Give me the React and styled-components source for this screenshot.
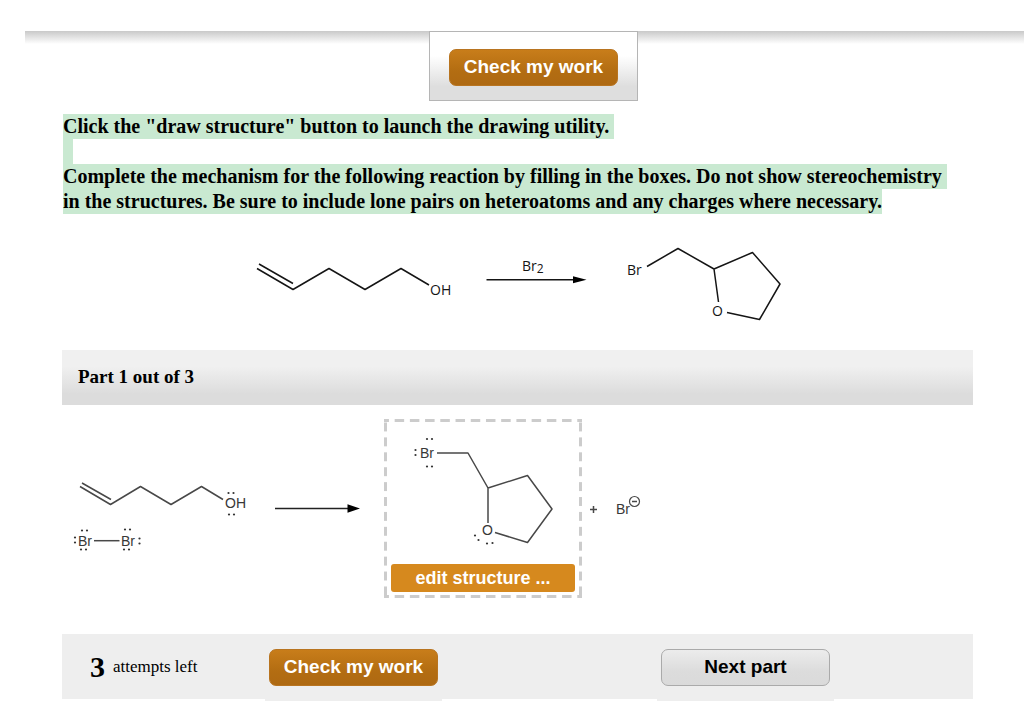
import styled, { createGlobalStyle } from "styled-components";

const GlobalStyle = createGlobalStyle`
  * {
    box-sizing: border-box;
  }

  body {
    margin: 0;
    background: #fff;
    color: #000;
    font-family: "Liberation Serif", "Times New Roman", serif;
  }
`;

const Page = styled.div`
  padding: 31px 0 22px 25px;
`;

const TopBar = styled.header`
  display: flex;
  justify-content: center;
  padding-left: 18px;
  background: linear-gradient(#c9c9c9, #fff) no-repeat top / 100% 13px;
`;

const Tab = styled.div`
  padding: 17px 19px 14px;
  height: 70px;
  border: 1px solid #b5b5b5;
  background: linear-gradient(#fff 35%, #dedede 80%);
`;

const Button = styled.button`
  display: block;
  width: 169px;
  height: 37px;
  padding: 0 0 2px;
  border: 1px solid ${({ $primary }) => ($primary ? "#b87420" : "#aaa")};
  border-radius: 7px;
  background: ${({ $primary }) =>
    $primary
      ? "linear-gradient(#c87d1a, #b36d12 60%, #ae6912)"
      : "linear-gradient(#ececec, #dcdcdc 60%, #dadada)"};
  color: ${({ $primary }) => ($primary ? "#fff" : "#000")};
  font: bold 19px "Liberation Sans", Arial, sans-serif;
`;

const Content = styled.main`
  padding: 13px 51px 0 37px;
`;

const Instructions = styled.p`
  margin: 0;
  padding: 0 12px 0 1px;
  font-size: 20px;
  font-weight: bold;
  line-height: 25px;
  white-space: break-spaces;
`;

const Highlight = styled.mark`
  padding: 1px 0 2px;
  background: #c9e9d1;
  color: #000;
`;

const Drawing = styled.svg`
  display: block;
  flex: none;
  overflow: visible;
  fill: none;
  stroke: ${({ $soft }) => ($soft ? "#484848" : "#151515")};
  stroke-width: 1.5;
  stroke-linejoin: round;

  text {
    fill: ${({ $soft }) => ($soft ? "#383838" : "#151515")};
    stroke: none;
    font-size: 14px;
    font-family: ${({ $soft }) =>
      $soft
        ? '"Liberation Sans", Arial, sans-serif'
        : '"Open Sans", "Noto Sans", sans-serif'};
  }
`;

const Reaction = styled.div`
  display: flex;
  justify-content: center;
  padding: 26px 0 26px 4px;
`;

const PartHeading = styled.h2`
  margin: 0;
  padding: 14px 16px 16px;
  background: linear-gradient(#f0f0f0 30%, #dcdcdc 80%);
  font-size: 19px;
  line-height: 25px;
`;

const Mechanism = styled.section`
  display: flex;
  align-items: flex-start;
  padding: 14px 0 36px 10px;
`;

const dash = (direction) =>
  `linear-gradient(${direction}, #ccc 30%, transparent 30% 70%, #ccc 70%)`;

/* the dashes are longer than those of a dashed border */
const AnswerBox = styled.div`
  flex: none;
  display: flex;
  flex-direction: column;
  justify-content: space-between;
  width: 198px;
  height: 179px;
  margin-left: 22px;
  padding: 16px 7px 6px;
  background:
    ${dash("90deg")} top / 15px 3px round no-repeat,
    ${dash("90deg")} bottom / 15px 3px round no-repeat,
    ${dash("180deg")} left / 3px 15px no-repeat round,
    ${dash("180deg")} right / 3px 15px no-repeat round;
`;

const EditButton = styled.button`
  height: 28px;
  padding: 0;
  border: 0;
  border-radius: 3px;
  background: #d6891e;
  color: #fff;
  font: bold 18px "Liberation Sans", Arial, sans-serif;
`;

const Footer = styled.footer`
  display: flex;
  align-items: flex-start;
  height: 65px;
  padding-left: 28px;
  background: #eee;
`;

const Attempts = styled.p`
  flex: none;
  display: flex;
  align-items: center;
  gap: 8px;
  width: 175px;
  height: 65px;
  margin: 0;
  font-size: 17px;

  strong {
    font-size: 30px;
  }
`;

const ButtonSlot = styled.div`
  flex: none;
  padding: 15px 4px;
  background: #eee;

  & + & {
    margin: 0 139px 0 auto;
  }
`;

const LonePairs = ({ dots }) =>
  dots.map(([x, y]) => (
    <circle key={`${x}-${y}`} cx={x} cy={y} r="1.1" fill="#333" stroke="none" />
  ));

const OverallReaction = () => (
  <Drawing width="540" height="84" viewBox="250 240 540 84">
    <path d="M259 264 293 283.5M257 268.5 293 289.5 329 268.5 365 289.5 401 268.5 429 285" />
    <text x="430" y="295">
      OH
    </text>
    <text x="522" y="271">
      Br
      <tspan dy="2" fontSize="12">
        2
      </tspan>
    </text>
    <path d="M486.5 279.7H575" />
    <path d="M573 276.2 586.5 279.7 573 283.2Z" fill="#000" stroke="none" />
    <text x="627" y="275">
      Br
    </text>
    <path d="M647 266.5 678 248.5 714 269 752.5 252.5 780 284 759.5 319.5 727 312.5M714 269 718.5 302" />
    <text x="712" y="316">
      O
    </text>
  </Drawing>
);

const Reactants = () => (
  <Drawing $soft width="290" height="142" viewBox="72 419 290 142">
    <path d="M82 483 111 499.5M80 486.5 110.5 504.5 140.5 486.5 171 504.5 201.5 486.5 223 499.5" />
    <text x="225" y="508">
      OH
    </text>
    <LonePairs
      dots={[
        [228.5, 493],
        [233.5, 493],
        [229, 514.5],
        [234, 514.5],
      ]}
    />
    <text x="78" y="546">
      Br
    </text>
    <path d="M94 540.7H119.5" />
    <text x="121" y="546">
      Br
    </text>
    <LonePairs
      dots={[
        [75, 537.5],
        [75, 542.5],
        [82, 530.5],
        [87, 530.5],
        [81, 549.5],
        [86, 549.5],
        [125, 529.5],
        [130, 529.5],
        [124, 549.5],
        [129, 549.5],
        [139.5, 538.5],
        [139.5, 543.5],
      ]}
    />
    <path d="M275 508.5H350" stroke="#222" />
    <path d="M347.5 504.2 360 508.5 347.5 512.8Z" fill="#000" stroke="none" />
  </Drawing>
);

const Product = () => (
  <Drawing $soft width="184" height="115" viewBox="391 435 184 115">
    <text x="420" y="458">
      Br
    </text>
    <LonePairs
      dots={[
        [415.5, 450],
        [415.5, 455],
        [427, 439],
        [432, 439],
        [427, 466.5],
        [432, 466.5],
        [475, 535.5],
        [478.5, 540],
        [487, 543.5],
        [492.5, 543],
      ]}
    />
    <path d="M437 453H468L488 488 527.5 475.5 552 509 527.5 542.5 495 532.5M488 488V523" />
    <text x="482" y="535">
      O
    </text>
  </Drawing>
);

const Bromide = () => (
  <Drawing $soft width="60" height="110" viewBox="582 419 60 110">
    <path d="M590 509.5H597M593.5 506V513" />
    <text x="616" y="514">
      Br
    </text>
    <circle cx="634.5" cy="501.5" r="5" strokeWidth="1.2" />
    <path d="M632 501.5H637" />
  </Drawing>
);

const App = () => {
  return (
    <>
      <GlobalStyle />
      <Page>
        <TopBar>
          <Tab>
            <Button type="button" $primary>
              Check my work
            </Button>
          </Tab>
        </TopBar>
        <Content>
          <Instructions>
            <Highlight>
              {'Click the "draw structure" button to launch the drawing utility. '}
            </Highlight>
            <br />
            <Highlight>{"\u00a0\u00a0"}</Highlight>
            <br />
            <Highlight>
              Complete the mechanism for the following reaction by filling in
              the boxes. Do not show stereochemistry in the structures. Be sure
              to include lone pairs on heteroatoms and any charges where
              necessary.
            </Highlight>
          </Instructions>
          <Reaction>
            <OverallReaction />
          </Reaction>
          <PartHeading>Part 1 out of 3</PartHeading>
          <Mechanism>
            <Reactants />
            <AnswerBox>
              <Product />
              <EditButton type="button">edit structure ...</EditButton>
            </AnswerBox>
            <Bromide />
          </Mechanism>
          <Footer>
            <Attempts>
              <strong>3</strong>
              attempts left
            </Attempts>
            <ButtonSlot>
              <Button type="button" $primary>
                Check my work
              </Button>
            </ButtonSlot>
            <ButtonSlot>
              <Button type="button">Next part</Button>
            </ButtonSlot>
          </Footer>
        </Content>
      </Page>
    </>
  );
};

export default App;
